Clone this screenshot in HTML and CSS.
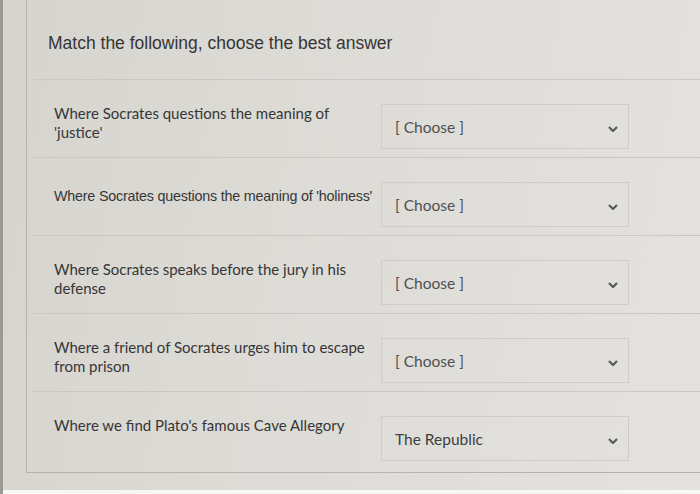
FILE: index.html
```html
<!DOCTYPE html>
<html>
<head>
<meta charset="utf-8">
<link rel="stylesheet" href="styles.css">
</head>
<body>
<div class="screen">
  <div class="card">
    <h1 class="title">Match the following, choose the best answer</h1>
    <div class="row">
      <div class="q">Where Socrates questions the meaning of 'justice'</div>
      <div class="select"><span>[ Choose ]</span><svg class="chev" viewBox="0 0 10 6"><path d="M1 1 L5 5 L9 1"/></svg></div>
    </div>
    <div class="row">
      <div class="q alt">Where Socrates questions the meaning of 'holiness'</div>
      <div class="select"><span>[ Choose ]</span><svg class="chev" viewBox="0 0 10 6"><path d="M1 1 L5 5 L9 1"/></svg></div>
    </div>
    <div class="row">
      <div class="q">Where Socrates speaks before the jury in his defense</div>
      <div class="select"><span>[ Choose ]</span><svg class="chev" viewBox="0 0 10 6"><path d="M1 1 L5 5 L9 1"/></svg></div>
    </div>
    <div class="row">
      <div class="q">Where a friend of Socrates urges him to escape from prison</div>
      <div class="select"><span>[ Choose ]</span><svg class="chev" viewBox="0 0 10 6"><path d="M1 1 L5 5 L9 1"/></svg></div>
    </div>
    <div class="row last">
      <div class="q">Where we find Plato's famous Cave Allegory</div>
      <div class="select"><span class="chosen">The Republic</span><svg class="chev" viewBox="0 0 10 6"><path d="M1 1 L5 5 L9 1"/></svg></div>
    </div>
  </div>
  <div class="below"></div>
  <div class="strip"></div>
</div>
</body>
</html>
```
FILE: styles.css
```css
html, body {
  margin: 0;
  padding: 0;
  width: 700px;
  height: 494px;
  overflow: hidden;
}
body {
  background: linear-gradient(100deg, #d6d4cf 0%, #dddbd6 40%, #e3e2de 100%);
  font-family: "Lato", "Liberation Sans", sans-serif;
  color: #3b3b3b;
}
.screen {
  height: 494px;
  display: flex;
  flex-direction: column;
  border-left: 3px solid #9b9994;
  box-sizing: border-box;
}
.card {
  margin-left: 23px;
  border-left: 1px solid #b5b3ae;
  border-bottom: 1px solid #b5b3ae;
  padding-bottom: 5px;
  flex: none;
}
.title {
  margin: 0 0 0 6px;
  padding: 33px 0 0 15px;
  box-sizing: border-box;
  height: 80px;
  border-bottom: 1px solid #cac8c3;
  font-family: "Liberation Sans", Arial, sans-serif;
  font-weight: normal;
  font-size: 17.5px;
  line-height: 21px;
  color: #363636;
}
.row {
  display: grid;
  grid-template-columns: 327px 248px;
  align-items: start;
  margin-left: 6px;
  padding: 24px 0 8px 21px;
  border-bottom: 1px solid #cac8c3;
}
.row.last {
  border-bottom: none;
  padding-bottom: 6px;
}
.q {
  font-size: 15px;
  line-height: 19px;
  padding-right: 4px;
  color: #363636;
}
.q.alt {
  font-family: "Liberation Sans", Arial, sans-serif;
  font-size: 14.3px;
  padding-right: 0;
  padding-top: 5px;
  letter-spacing: -0.2px;
  white-space: nowrap;
}
.select {
  height: 45px;
  box-sizing: border-box;
  border: 1px solid #cfcdc8;
  display: flex;
  align-items: center;
  justify-content: space-between;
  padding: 0 10px 0 13px;
  font-size: 15.5px;
  color: #505050;
}
.select .chosen {
  color: #404040;
}
.chev {
  width: 10px;
  height: 6px;
  margin-top: 4px;
  fill: none;
  stroke: #5a5a5a;
  stroke-width: 2.2;
}
.below {
  flex: 1;
}
.strip {
  height: 4px;
  background: #f7f7f5;
  flex: none;
}
```
